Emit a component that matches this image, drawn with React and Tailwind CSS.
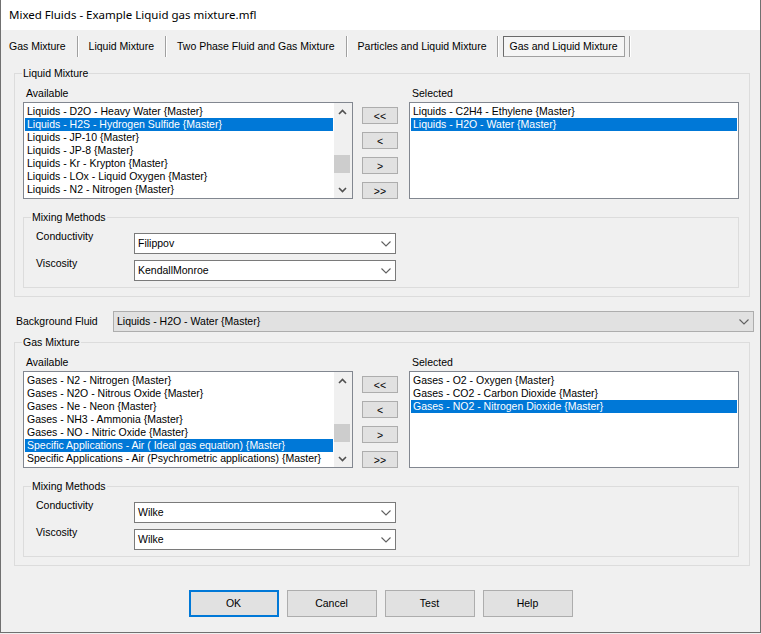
const LIQ_AVAIL = [
  'Liquids - D2O - Heavy Water {Master}',
  'Liquids - H2S - Hydrogen Sulfide {Master}',
  'Liquids - JP-10 {Master}',
  'Liquids - JP-8 {Master}',
  'Liquids - Kr - Krypton {Master}',
  'Liquids - LOx - Liquid Oxygen {Master}',
  'Liquids - N2 - Nitrogen {Master}',
]
const LIQ_SEL = ['Liquids - C2H4 - Ethylene {Master}', 'Liquids - H2O - Water {Master}']

const GAS_AVAIL = [
  'Gases - N2 - Nitrogen {Master}',
  'Gases - N2O - Nitrous Oxide {Master}',
  'Gases - Ne - Neon {Master}',
  'Gases - NH3 - Ammonia {Master}',
  'Gases - NO - Nitric Oxide {Master}',
  'Specific Applications - Air ( Ideal gas equation) {Master}',
  'Specific Applications - Air (Psychrometric applications) {Master}',
]
const GAS_SEL = [
  'Gases - O2 - Oxygen {Master}',
  'Gases - CO2 - Carbon Dioxide {Master}',
  'Gases - NO2 - Nitrogen Dioxide {Master}',
]

function Chevron({ up }) {
  return (
    <svg width="9" height="6" viewBox="0 0 9 6">
      <path d={up ? 'M1 5 L4.5 1.5 L8 5' : 'M1 1 L4.5 4.5 L8 1'} fill="none" stroke="#505050" strokeWidth="1.6" />
    </svg>
  )
}

function ComboChevron() {
  return (
    <svg width="10" height="6" viewBox="0 0 10 6">
      <path d="M0.5 0.5 L5 5 L9.5 0.5" fill="none" stroke="#606060" strokeWidth="1.1" />
    </svg>
  )
}

function ListBox({ items, active, scroll }) {
  return (
    <div className="w-[330px] h-[97px] bg-white border border-[#828790] flex">
      <div className="flex-1 pt-[2px] px-[1px] overflow-hidden">
        {items.map((it, i) => (
          <div key={it}
            className={`h-[13px] leading-[13px] pl-[2px] whitespace-nowrap ${i === active ? 'bg-[#0078d7] text-white' : ''}`}>
            {it}
          </div>
        ))}
      </div>
      {scroll && (
        <div className="w-[18px] pr-[2px] flex flex-col bg-[#f0f0f0]">
          <div className="h-[17px] flex items-center justify-center"><Chevron up /></div>
          <div className="flex-1">
            <div className="mt-[35px] h-[18px] bg-[#cdcdcd]" />
          </div>
          <div className="h-[17px] flex items-center justify-center"><Chevron /></div>
        </div>
      )}
    </div>
  )
}

function MoveButtons() {
  return (
    <div className="w-[36px] mt-[20px] flex flex-col gap-[8px]">
      {['<<', '<', '>', '>>'].map(b => (
        <button key={b} className="h-[17px] bg-[#e1e1e1] border border-[#adadad] leading-[14px] text-[10.5px]">{b}</button>
      ))}
    </div>
  )
}

function Combo({ value, w = 'w-[262px]', gray }) {
  return (
    <div className={`${w} h-[21px] flex items-center justify-between pl-[3px] pr-[4px] border ${gray ? 'bg-[#e1e1e1] border-[#adadad]' : 'bg-white border-[#7a7a7a]'}`}>
      <span>{value}</span>
      <ComboChevron />
    </div>
  )
}

function Group({ title, className = '', children }) {
  return (
    <fieldset className={`border border-[#dcdcdc] ${className}`}>
      <legend className="ml-[7px] px-[1px] leading-[13px]">{title}</legend>
      {children}
    </fieldset>
  )
}

function MixingMethods({ conductivity, viscosity }) {
  return (
    <Group title="Mixing Methods" className="mt-[12px] w-[716px]">
      <div className="pt-[9px] pb-[6px] pl-[12px] flex flex-col gap-[6px]">
        <div className="flex items-start">
          <span className="w-[98px] -mt-[3px] leading-[13px]">Conductivity</span>
          <Combo value={conductivity} />
        </div>
        <div className="flex items-start">
          <span className="w-[98px] -mt-[3px] leading-[13px]">Viscosity</span>
          <Combo value={viscosity} />
        </div>
      </div>
    </Group>
  )
}

function MixturePanel({ title, avail, availActive, sel, selActive, conductivity, viscosity, className = '' }) {
  return (
    <Group title={title} className={`ml-[13px] w-[736px] ${className}`}>
      <div className="pt-[7px] pb-[8px] pl-[8px]">
        <div className="flex">
          <div>
            <div className="h-[15px] leading-[13px] pl-[3px]">Available</div>
            <ListBox items={avail} active={availActive} scroll />
          </div>
          <div className="ml-[9px]"><MoveButtons /></div>
          <div className="ml-[11px]">
            <div className="h-[15px] leading-[13px] pl-[3px]">Selected</div>
            <ListBox items={sel} active={selActive} />
          </div>
        </div>
        <MixingMethods conductivity={conductivity} viscosity={viscosity} />
      </div>
    </Group>
  )
}

function Sep({ className = '' }) {
  return <div className={`w-[2px] h-[21px] border-l border-[#a0a0a0] border-r border-r-white ${className}`} />
}

export default function App() {
  return (
    <div className="w-[761px] h-[634px] bg-[#f0f0f0] font-['Liberation_Sans',Arial,sans-serif] text-[10.5px] text-black">
      <div className="h-[633px] border-x border-b border-[#707070] flex flex-col">
        <div className="h-[30px] bg-white flex items-center pl-[8px] font-['Noto_Sans',sans-serif] text-[11.5px]">
          Mixed Fluids - Example Liquid gas mixture.mfl
        </div>

        <div className="h-[21px] mt-[6px] pl-[8px] flex items-center">
          <span>Gas Mixture</span>
          <Sep className="ml-[11px] mr-[10px]" />
          <span>Liquid Mixture</span>
          <Sep className="ml-[11px] mr-[10px]" />
          <span>Two Phase Fluid and Gas Mixture</span>
          <Sep className="ml-[11px] mr-[10px]" />
          <span>Particles and Liquid Mixture</span>
          <Sep className="ml-[10px] mr-[4px]" />
          <div className="h-[21px] px-[6px] flex items-center bg-[#f5f5f5] border border-[#a0a0a0] border-l-[#6a6a6a] border-t-[#6a6a6a]">
            Gas and Liquid Mixture
          </div>
          <Sep className="ml-[4px]" />
        </div>

        <MixturePanel className="mt-[10px]" title="Liquid Mixture"
          avail={LIQ_AVAIL} availActive={1} sel={LIQ_SEL} selActive={1}
          conductivity="Filippov" viscosity="KendallMonroe" />

        <div className="mt-[14px] pl-[15px] flex items-center">
          <span className="w-[97px]">Background Fluid</span>
          <Combo gray w="w-[641px]" value="Liquids - H2O - Water {Master}" />
        </div>

        <MixturePanel className="mt-[4px]" title="Gas Mixture"
          avail={GAS_AVAIL} availActive={5} sel={GAS_SEL} selActive={2}
          conductivity="Wilke" viscosity="Wilke" />

        <div className="mt-[24px] flex justify-center gap-[8px]">
          <button className="w-[90px] h-[27px] bg-[#e1e1e1] border-2 border-[#0078d7]">OK</button>
          <button className="w-[90px] h-[27px] bg-[#e1e1e1] border border-[#adadad]">Cancel</button>
          <button className="w-[90px] h-[27px] bg-[#e1e1e1] border border-[#adadad]">Test</button>
          <button className="w-[90px] h-[27px] bg-[#e1e1e1] border border-[#adadad]">Help</button>
        </div>
      </div>
    </div>
  )
}
